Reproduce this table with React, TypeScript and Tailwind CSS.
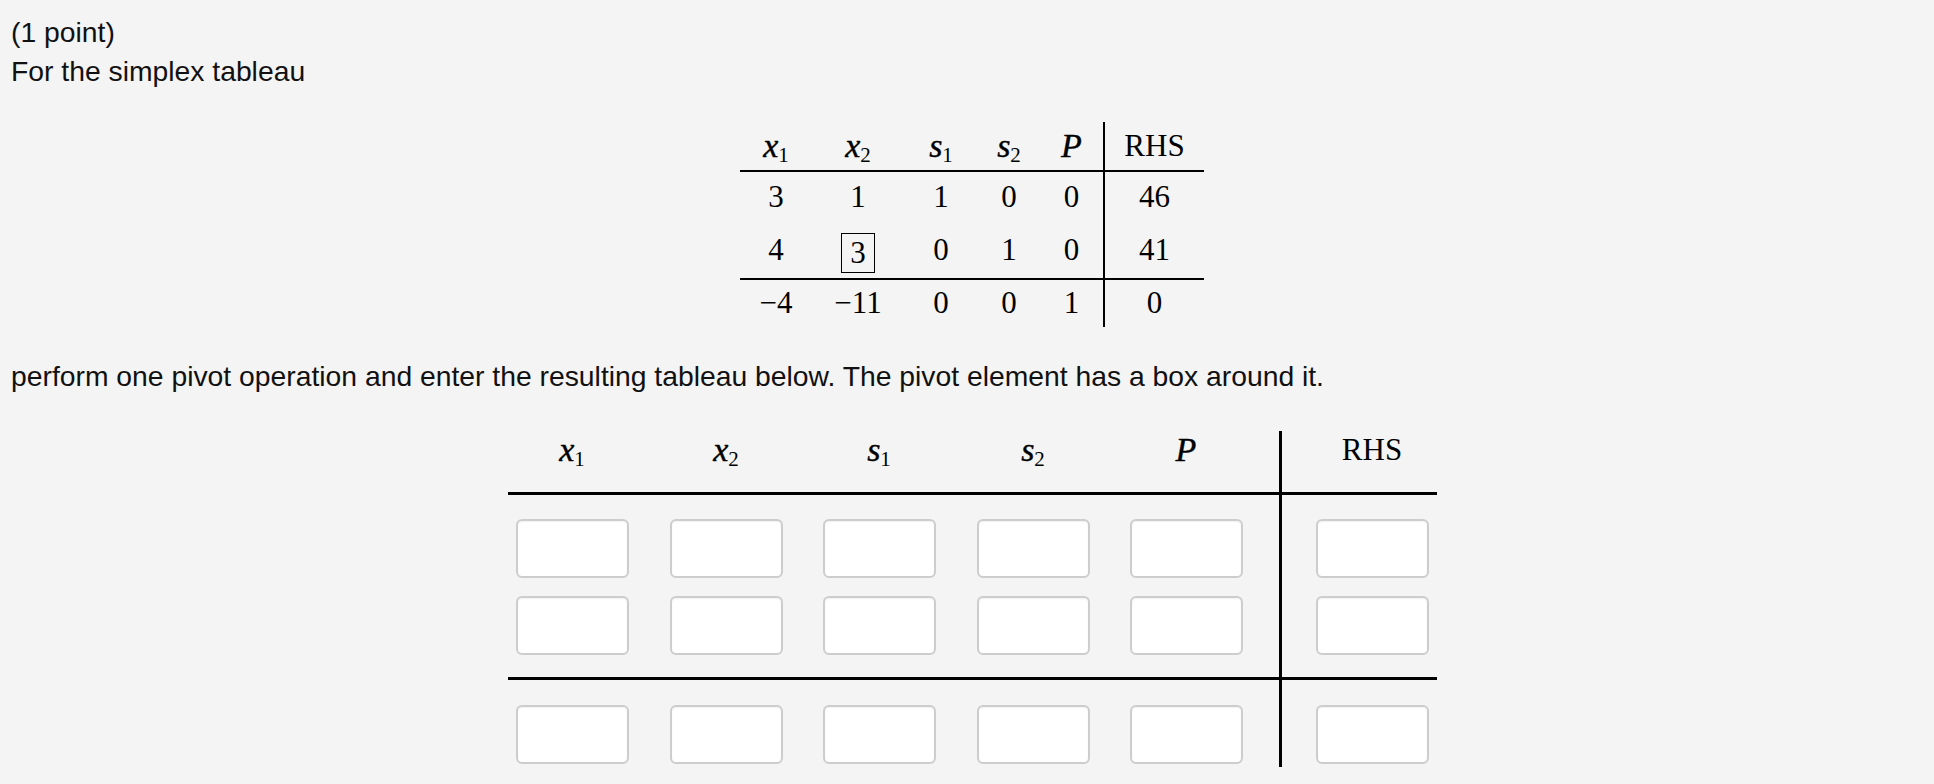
import { ReactNode } from "react";

function V({ b, s }: { b: string; s?: string }) {
  return (
    <span className="whitespace-nowrap">
      <i className="text-[34px] [-webkit-text-stroke:0.4px_black]">{b}</i>
      {s ? <sub className="text-[21px] not-italic">{s}</sub> : null}
    </span>
  );
}

const heads: ReactNode[] = [
  <V b="x" s="1" />,
  <V b="x" s="2" />,
  <V b="s" s="1" />,
  <V b="s" s="2" />,
  <V b="P" />,
  <span>RHS</span>,
];

// widths of the given tableau's columns, P column carries the divider
const t1w = ["w-[72px]", "w-[92px]", "w-[74px]", "w-[62px]", "w-[65px] border-r-2 border-black", "w-[99px]"];

const body = [
  ["3", "1", "1", "0", "0", "46"],
  ["4", "box", "0", "1", "0", "41"],
];
const last = ["−4", "−11", "0", "0", "1", "0"];

function Tableau() {
  return (
    <div className="w-[464px] font-['Liberation_Serif',serif] text-[31px] text-black">
      <div className="flex h-[50px] border-b-2 border-black">
        {heads.map((h, i) => (
          <div key={i} className={`${t1w[i]} text-center leading-[47px]`}>
            {h}
          </div>
        ))}
      </div>
      <div className="flex border-b-2 border-black">
        {t1w.map((w, i) => (
          <div key={i} className={`${w} flex flex-col text-center`}>
            {body.map((r, j) => (
              <div key={j} className="h-[53px] leading-[49px]">
                {r[i] === "box" ? (
                  <span className="inline-block h-[40px] w-[34px] border-[1.5px] border-black align-middle leading-[37px]">3</span>
                ) : (
                  r[i]
                )}
              </div>
            ))}
          </div>
        ))}
      </div>
      <div className="flex h-[47px]">
        {last.map((v, i) => (
          <div key={i} className={`${t1w[i]} text-center leading-[46px]`}>
            {v}
          </div>
        ))}
      </div>
    </div>
  );
}

const t2w = ["w-[154px]", "w-[153px]", "w-[154px]", "w-[153px]", "w-[160px] border-r-[3px] border-black", "w-[155px]"];
const t2pad = ["pl-[8px]", "pl-[8px]", "pl-[8px]", "pl-[8px]", "pl-[8px]", "pl-[34px]"];

function Box() {
  return (
    <input
      type="text"
      className="h-[59px] w-[113px] rounded-[6px] border-2 border-[#cdcdcd] bg-white shadow-[inset_0_1px_2px_rgba(0,0,0,0.06)] outline-none"
    />
  );
}

function AnswerTable() {
  return (
    <div className="w-[929px] font-['Liberation_Serif',serif] text-[31px] text-black">
      <div className="flex h-[64px] border-b-[3px] border-black">
        {heads.map((h, i) => (
          <div key={i} className={`${t2w[i]} ${t2pad[i]}`}>
            <div className="w-[113px] pt-[2px] text-center leading-[34px]">{h}</div>
          </div>
        ))}
      </div>
      <div className="flex h-[185px] border-b-[3px] border-black">
        {t2w.map((w, i) => (
          <div key={i} className={`${w} ${t2pad[i]} flex flex-col gap-[18px] pt-[24px]`}>
            <Box />
            <Box />
          </div>
        ))}
      </div>
      <div className="flex h-[87px]">
        {t2w.map((w, i) => (
          <div key={i} className={`${w} ${t2pad[i]} pt-[25px]`}>
            <Box />
          </div>
        ))}
      </div>
    </div>
  );
}

export default function App() {
  return (
    <div className="min-h-screen bg-[#f4f4f4] pl-[11px] pt-[13px] font-['Liberation_Sans',Arial,sans-serif] text-[28.3px] leading-[39px] text-[#111]">
      <p>(1 point)</p>
      <p>For the simplex tableau</p>
      <div className="mt-[31px] flex justify-center pr-[1px]">
        <Tableau />
      </div>
      <p className="mt-[30px]">
        perform one pivot operation and enter the resulting tableau below. The pivot element has a box around it.
      </p>
      <div className="mt-[35px] flex justify-center pr-[1px]">
        <AnswerTable />
      </div>
    </div>
  );
}
